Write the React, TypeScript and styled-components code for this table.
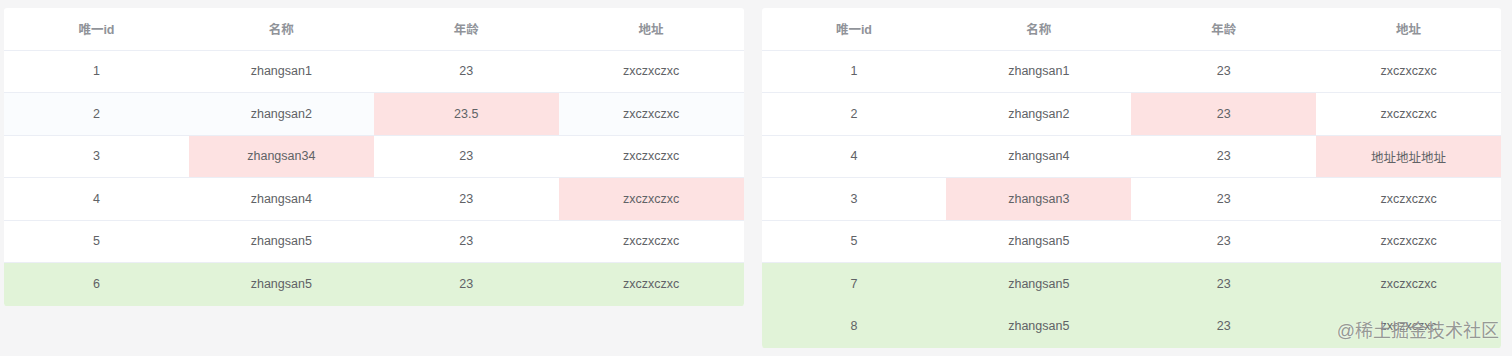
import React from "react";
import styled, { createGlobalStyle } from "styled-components";

type Tone = "plain" | "danger" | "success" | "hover";

interface RowData {
  cells: string[];
  marked?: number; // index of the cell that is highlighted pink
  tone?: Tone;
}

const headers = ["唯一id", "名称", "年龄", "地址"];

const leftRows: RowData[] = [
  { cells: ["1", "zhangsan1", "23", "zxczxczxc"] },
  { cells: ["2", "zhangsan2", "23.5", "zxczxczxc"], marked: 2, tone: "hover" },
  { cells: ["3", "zhangsan34", "23", "zxczxczxc"], marked: 1 },
  { cells: ["4", "zhangsan4", "23", "zxczxczxc"], marked: 3 },
  { cells: ["5", "zhangsan5", "23", "zxczxczxc"] },
  { cells: ["6", "zhangsan5", "23", "zxczxczxc"], tone: "success" },
];

const rightRows: RowData[] = [
  { cells: ["1", "zhangsan1", "23", "zxczxczxc"] },
  { cells: ["2", "zhangsan2", "23", "zxczxczxc"], marked: 2 },
  { cells: ["4", "zhangsan4", "23", "地址地址地址"], marked: 3 },
  { cells: ["3", "zhangsan3", "23", "zxczxczxc"], marked: 1 },
  { cells: ["5", "zhangsan5", "23", "zxczxczxc"] },
  { cells: ["7", "zhangsan5", "23", "zxczxczxc"], tone: "success" },
  { cells: ["8", "zhangsan5", "23", "zxczxczxc"], tone: "success" },
];

const DataTable: React.FC<{ rows: RowData[] }> = ({ rows }) => {
  return (
    <Table>
      {headers.map((h) => (
        <HeadCell key={h}>{h}</HeadCell>
      ))}
      {rows.map((row, r) =>
        row.cells.map((c, i) => (
          <Cell
            key={`${r}-${i}`}
            $tone={row.marked === i ? "danger" : row.tone || "plain"}
          >
            {c}
          </Cell>
        ))
      )}
    </Table>
  );
};

const App: React.FC = () => {
  return (
    <>
      <GlobalStyle />
      <Page>
        <DataTable rows={leftRows} />
        <DataTable rows={rightRows} />
        <Watermark>@稀土掘金技术社区</Watermark>
      </Page>
    </>
  );
};

export default App;

const GlobalStyle = createGlobalStyle`
  html, body {
    margin: 0;
    padding: 0;
    background: #f5f5f6;
  }
  body {
    font-family: "Liberation Sans", "Noto Sans CJK SC", sans-serif;
  }
`;

const Page = styled.div`
  position: relative;
  display: flex;
  align-items: flex-start;
  gap: 18px;
  width: 1512px;
  height: 356px;
  box-sizing: border-box;
  padding: 8px 11px 0 4px;
  overflow: hidden;
`;

const Table = styled.div`
  flex: 1;
  display: grid;
  grid-template-columns: repeat(4, 1fr);
  grid-auto-rows: 42.5px;
  background: #ffffff;
  border-radius: 3px;
  overflow: hidden;
`;

const HeadCell = styled.div`
  display: flex;
  align-items: center;
  justify-content: center;
  box-sizing: border-box;
  border-bottom: 1px solid #ebeef5;
  color: #909399;
  font-size: 12.5px;
  font-weight: bold;
`;

const toneBg: Record<Tone, string> = {
  plain: "#ffffff",
  hover: "#fafcfe",
  danger: "#fde2e2",
  success: "#e1f3d8",
};

const Cell = styled.div<{ $tone: Tone }>`
  display: flex;
  align-items: center;
  justify-content: center;
  box-sizing: border-box;
  border-bottom: 1px solid
    ${(p) => (p.$tone === "success" ? "#e1f3d8" : "#ebeef5")};
  background: ${(p) => toneBg[p.$tone]};
  color: #606266;
  font-size: 12.5px;
`;

const Watermark = styled.div`
  position: absolute;
  right: 13px;
  bottom: 14px;
  font-size: 18px;
  line-height: 22px;
  color: rgba(110, 110, 110, 0.7);
  text-shadow: 0 0 2px rgba(255, 255, 255, 0.8);
  pointer-events: none;
`;
